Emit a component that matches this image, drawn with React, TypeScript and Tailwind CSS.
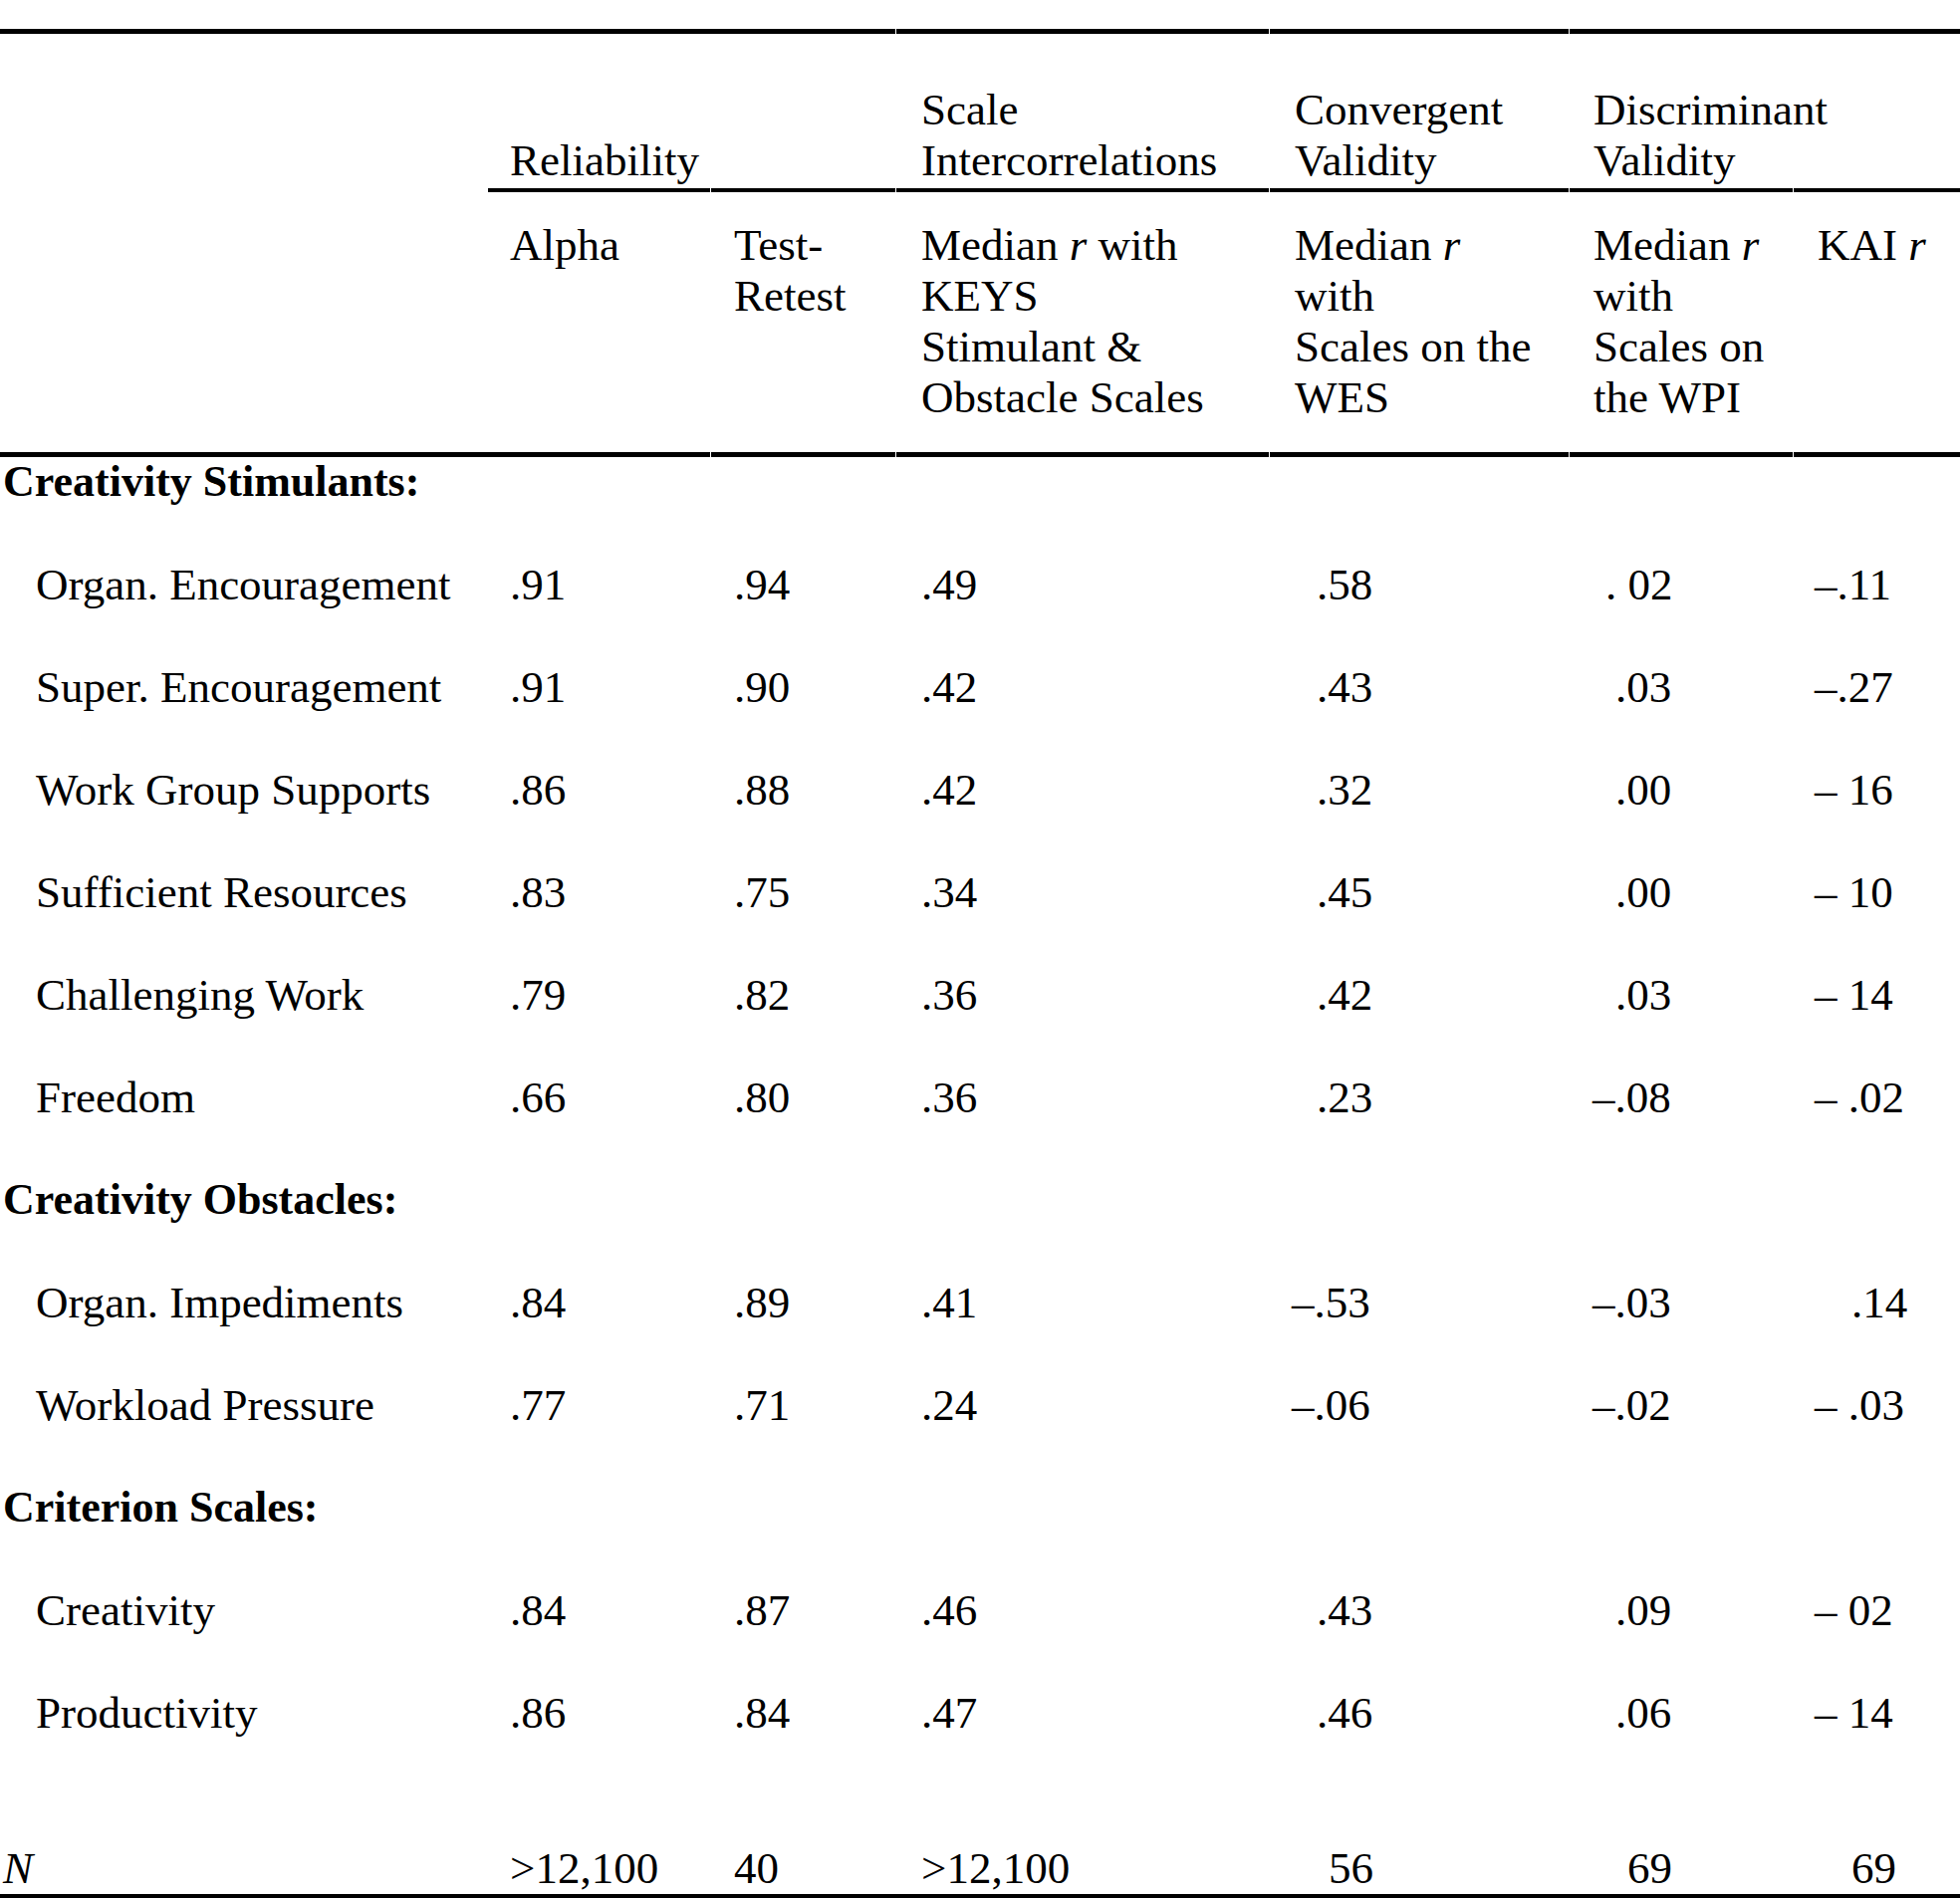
import React from "react";

// 7 tracks + 1px slits between cells (the little white breaks in the rules)
const GRID =
  "grid grid-cols-[489px_223px_185px_374px_300px_224px_167px] gap-x-px";

type Cell = [React.ReactNode, string];

interface DataRow {
  label: string;
  cells: Cell[];
}

interface Section {
  title: string;
  rows: DataRow[];
}

const SECTIONS: Section[] = [
  {
    title: "Creativity Stimulants:",
    rows: [
      {
        label: "Organ. Encouragement",
        cells: [
          [".91", "pl-[22px]"],
          [".94", "pl-[23px]"],
          [".49", "pl-[25px]"],
          [".58", "pl-[47px]"],
          [". 02", "pl-[36px]"],
          ["–.11", "pl-[21px]"],
        ],
      },
      {
        label: "Super. Encouragement",
        cells: [
          [".91", "pl-[22px]"],
          [".90", "pl-[23px]"],
          [".42", "pl-[25px]"],
          [".43", "pl-[47px]"],
          [".03", "pl-[46px]"],
          ["–.27", "pl-[21px]"],
        ],
      },
      {
        label: "Work Group Supports",
        cells: [
          [".86", "pl-[22px]"],
          [".88", "pl-[23px]"],
          [".42", "pl-[25px]"],
          [".32", "pl-[47px]"],
          [".00", "pl-[46px]"],
          ["– 16", "pl-[21px]"],
        ],
      },
      {
        label: "Sufficient Resources",
        cells: [
          [".83", "pl-[22px]"],
          [".75", "pl-[23px]"],
          [".34", "pl-[25px]"],
          [".45", "pl-[47px]"],
          [".00", "pl-[46px]"],
          ["– 10", "pl-[21px]"],
        ],
      },
      {
        label: "Challenging Work",
        cells: [
          [".79", "pl-[22px]"],
          [".82", "pl-[23px]"],
          [".36", "pl-[25px]"],
          [".42", "pl-[47px]"],
          [".03", "pl-[46px]"],
          ["– 14", "pl-[21px]"],
        ],
      },
      {
        label: "Freedom",
        cells: [
          [".66", "pl-[22px]"],
          [".80", "pl-[23px]"],
          [".36", "pl-[25px]"],
          [".23", "pl-[47px]"],
          ["–.08", "pl-[23px]"],
          ["– .02", "pl-[21px]"],
        ],
      },
    ],
  },
  {
    title: "Creativity Obstacles:",
    rows: [
      {
        label: "Organ. Impediments",
        cells: [
          [".84", "pl-[22px]"],
          [".89", "pl-[23px]"],
          [".41", "pl-[25px]"],
          ["–.53", "pl-[22px]"],
          ["–.03", "pl-[23px]"],
          [".14", "pl-[58px]"],
        ],
      },
      {
        label: "Workload Pressure",
        cells: [
          [".77", "pl-[22px]"],
          [".71", "pl-[23px]"],
          [".24", "pl-[25px]"],
          ["–.06", "pl-[22px]"],
          ["–.02", "pl-[23px]"],
          ["– .03", "pl-[21px]"],
        ],
      },
    ],
  },
  {
    title: "Criterion Scales:",
    rows: [
      {
        label: "Creativity",
        cells: [
          [".84", "pl-[22px]"],
          [".87", "pl-[23px]"],
          [".46", "pl-[25px]"],
          [".43", "pl-[47px]"],
          [".09", "pl-[46px]"],
          ["– 02", "pl-[21px]"],
        ],
      },
      {
        label: "Productivity",
        cells: [
          [".86", "pl-[22px]"],
          [".84", "pl-[23px]"],
          [".47", "pl-[25px]"],
          [".46", "pl-[47px]"],
          [".06", "pl-[46px]"],
          ["– 14", "pl-[21px]"],
        ],
      },
    ],
  },
];

const N_CELLS: Cell[] = [
  [">12,100", "pl-[22px]"],
  ["40", "pl-[23px]"],
  [">12,100", "pl-[25px]"],
  ["56", "pl-[59px]"],
  ["69", "pl-[58px]"],
  ["69", "pl-[58px]"],
];

const BodyRow = ({ label, cells }: DataRow) => (
  <div className={`${GRID} h-[103px] leading-[50px]`}>
    <div className="pl-[36px] whitespace-nowrap">{label}</div>
    {cells.map(([text, pad], i) => (
      <div key={i} className={`${pad} whitespace-pre`}>
        {text}
      </div>
    ))}
  </div>
);

export default function App() {
  return (
    <div className="min-h-[1906px] w-[1968px] bg-white pt-[29px] font-['Liberation_Serif',serif] text-[45px] text-black">
      {/* spanning headers */}
      <div className={`${GRID} h-[160px] leading-[51px]`}>
        <div className="-mr-px border-t-[5px] border-black" />
        <div className="col-span-2 flex flex-col justify-end border-t-[5px] border-black pb-[2px] pl-[22px]">
          Reliability
        </div>
        <div className="flex flex-col justify-end border-t-[5px] border-black pb-[2px] pl-[25px]">
          <span>Scale</span>
          <span>Intercorrelations</span>
        </div>
        <div className="flex flex-col justify-end border-t-[5px] border-black pb-[2px] pl-[25px]">
          <span>Convergent</span>
          <span>Validity</span>
        </div>
        <div className="col-span-2 flex flex-col justify-end border-t-[5px] border-black pb-[2px] pl-[24px]">
          <span>Discriminant</span>
          <span>Validity</span>
        </div>
      </div>

      {/* column headers */}
      <div className={`${GRID} h-[270px] leading-[51px]`}>
        <div className="-mr-px border-t-[4px] border-b-[5px] border-t-white border-b-black" />
        <div className="border-y-[4px] border-b-[5px] border-black pt-[28px] pl-[22px]">
          Alpha
        </div>
        <div className="border-y-[4px] border-b-[5px] border-black pt-[28px] pl-[23px]">
          Test-
          <br />
          Retest
        </div>
        <div className="border-y-[4px] border-b-[5px] border-black pt-[28px] pl-[25px] whitespace-nowrap">
          Median <i>r</i> with
          <br />
          KEYS
          <br />
          Stimulant &amp;
          <br />
          Obstacle Scales
        </div>
        <div className="border-y-[4px] border-b-[5px] border-black pt-[28px] pl-[25px] whitespace-nowrap">
          Median <i>r</i>
          <br />
          with
          <br />
          Scales on the
          <br />
          WES
        </div>
        <div className="border-y-[4px] border-b-[5px] border-black pt-[28px] pl-[24px] whitespace-nowrap">
          Median <i>r</i>
          <br />
          with
          <br />
          Scales on
          <br />
          the WPI
        </div>
        <div className="border-y-[4px] border-b-[5px] border-black pt-[28px] pl-[24px] whitespace-nowrap">
          KAI <i>r</i>
        </div>
      </div>

      {/* body */}
      {SECTIONS.map((section) => (
        <React.Fragment key={section.title}>
          <div className="h-[103px] pl-[3px] text-[44px] font-bold leading-[50px]">
            {section.title}
          </div>
          {section.rows.map((row) => (
            <BodyRow key={row.label} {...row} />
          ))}
        </React.Fragment>
      ))}

      <div className="h-[53px]" />

      <div className="border-b-[4px] border-black">
        <div className={`${GRID} h-[51px] leading-[50px]`}>
          <div className="pl-[3px] italic">N</div>
          {N_CELLS.map(([text, pad], i) => (
            <div key={i} className={pad}>
              {text}
            </div>
          ))}
        </div>
      </div>
    </div>
  );
}
